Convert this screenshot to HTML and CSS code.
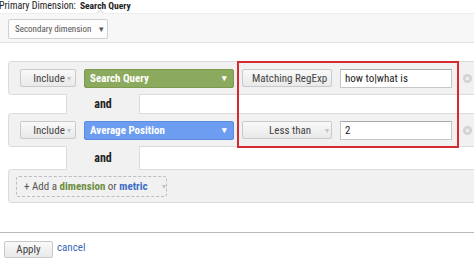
FILE: index.html
```html
<!DOCTYPE html>
<html>
<head>
<meta charset="utf-8">
<link rel="stylesheet" href="styles.css">
</head>
<body>
<div class="primary"><span class="lbl">Primary Dimension:</span><span class="val">Search Query</span></div>
<div class="toolbar">
  <div class="secdim">Secondary dimension <span class="caret-dark">&#9662;</span></div>
</div>
<div class="builder">
  <div class="row">
    <div class="btn include">Include<span class="caret-light">&#9662;</span></div>
    <div class="select green">Search Query<span class="caret-white">&#9662;</span></div>
    <div class="btn match">Matching RegExp</div>
    <div class="input">how to|what is</div>
    <div class="close"><svg width="9" height="9" viewBox="0 0 9 9"><circle cx="4.5" cy="4.5" r="4.5" fill="#d2d2d2"/><path d="M2.8 2.8 L6.2 6.2 M6.2 2.8 L2.8 6.2" stroke="#f4f4f4" stroke-width="1.2"/></svg></div>
  </div>
  <div class="and and-1"><span>and</span></div>
  <div class="row">
    <div class="btn include">Include<span class="caret-light">&#9662;</span></div>
    <div class="select blue">Average Position<span class="caret-white">&#9662;</span></div>
    <div class="btn less">Less than<span class="caret-light">&#9662;</span></div>
    <div class="input">2</div>
    <div class="close"><svg width="9" height="9" viewBox="0 0 9 9"><circle cx="4.5" cy="4.5" r="4.5" fill="#d2d2d2"/><path d="M2.8 2.8 L6.2 6.2 M6.2 2.8 L2.8 6.2" stroke="#f4f4f4" stroke-width="1.2"/></svg></div>
  </div>
  <div class="and and-2"><span>and</span></div>
  <div class="row row-add">
    <div class="add">+ Add a <b class="dim">dimension</b> or <b class="met">metric</b><span class="caret-light add-caret">&#9662;</span></div>
  </div>
  <div class="highlight"></div>
</div>
<div class="divider"></div>
<div class="actions">
  <div class="btn apply">Apply</div>
  <span class="cancel">cancel</span>
</div>
</body>
</html>
```
FILE: styles.css
```css
html, body {
  margin: 0;
  padding: 0;
  background: #ffffff;
  overflow: hidden;
}
body {
  width: 474px;
  height: 261px;
  font-family: "Liberation Sans Narrow", "Arial Narrow", "Roboto Condensed", "Liberation Sans", Arial, sans-serif;
  font-size: 11px;
  color: #333;
  white-space: nowrap;
}
.primary {
  height: 13px;
  line-height: 12px;
  font-size: 10px;
  color: #222;
  margin-left: -1px;
}
.primary .val {
  font-weight: bold;
  font-size: 9.5px;
  margin-left: 4px;
}
.toolbar {
  position: relative;
  background: #f7f7f7;
  border-top: 1px solid #eeeeee;
  border-bottom: 1px solid #e0e0e0;
  padding: 5px 0 0 8px;
  box-sizing: border-box;
  height: 30px;
}
.toolbar::before {
  content: "";
  position: absolute;
  left: 96px;
  top: -5px;
  border-left: 4px solid transparent;
  border-right: 4px solid transparent;
  border-bottom: 4px solid #e2e2e2;
}
.toolbar::after {
  content: "";
  position: absolute;
  left: 97px;
  top: -3px;
  border-left: 3px solid transparent;
  border-right: 3px solid transparent;
  border-bottom: 3px solid #f7f7f7;
}
.secdim {
  display: inline-flex;
  align-items: center;
  width: 100px;
  height: 20px;
  box-sizing: border-box;
  border: 1px solid #cfcfcf;
  border-radius: 2px;
  background: #fdfdfd;
  padding-left: 6px;
  font-size: 9px;
  color: #555;
}
.caret-dark {
  font-size: 9px;
  color: #555;
  margin-left: 8px;
}
.builder {
  position: relative;
  margin-top: 18px;
  margin-left: 8px;
  width: 466px;
}
.row {
  display: flex;
  align-items: center;
  height: 34px;
  box-sizing: border-box;
  background: #f1f1f1;
  border: 1px solid #dcdcdc;
  border-right: none;
  border-radius: 4px 0 0 4px;
  padding-left: 11px;
}
.and {
  position: relative;
  z-index: 1;
  margin: -1px 0 -1px 58px;
  width: 74px;
  box-sizing: border-box;
  background: #f1f1f1;
  border-left: 1px solid #dcdcdc;
  border-right: 1px solid #dcdcdc;
  display: flex;
  align-items: center;
  justify-content: center;
  font-weight: bold;
  font-size: 12px;
  color: #222;
}
.and-1 { height: 20px; }
.and-2 { height: 24px; }
.btn {
  display: flex;
  align-items: center;
  justify-content: center;
  box-sizing: border-box;
  height: 18px;
  border: 1px solid #c9c9c9;
  border-radius: 2px;
  background: linear-gradient(#f9f9f9, #e9e9e9);
  color: #444;
  overflow: hidden;
}
.include {
  width: 56px;
  padding-left: 8px;
}
.caret-light {
  font-size: 8px;
  color: #c4c4c4;
  margin-left: 2px;
}
.select {
  display: flex;
  align-items: center;
  justify-content: space-between;
  box-sizing: border-box;
  width: 150px;
  height: 19px;
  margin-left: 8px;
  padding: 0 6px 0 5px;
  border-radius: 2px;
  color: #ffffff;
  font-weight: bold;
}
.green {
  background: #8caa5e;
  border: 1px solid #7b9a4e;
}
.blue {
  background: #6d9df0;
  border: 1px solid #5b8be0;
}
.caret-white {
  font-size: 9px;
  color: #ffffff;
}
.match {
  width: 90px;
  margin-left: 8px;
  justify-content: flex-start;
  padding-left: 9px;
}
.less {
  width: 90px;
  margin-left: 8px;
  justify-content: flex-start;
  padding-left: 26px;
}
.less .caret-light {
  margin-left: 14px;
}
.input {
  display: flex;
  align-items: center;
  box-sizing: border-box;
  width: 112px;
  height: 19px;
  margin-left: 8px;
  padding-left: 4px;
  background: #ffffff;
  border: 1px solid #c6c6c6;
  border-top-color: #a9a9a9;
  color: #222;
}
.close {
  display: flex;
  margin-left: 11px;
}
.row-add {
  padding-left: 7px;
}
.add {
  display: flex;
  align-items: center;
  box-sizing: border-box;
  width: 151px;
  height: 21px;
  border: 1px dashed #bdbdbd;
  border-radius: 3px;
  padding-left: 7px;
  color: #555;
  white-space: pre;
}
.dim { color: #6f8d42; }
.met { color: #3e6ec6; }
.add-caret {
  margin-left: 14px;
}
.highlight {
  position: absolute;
  left: 229px;
  top: 0;
  width: 222px;
  height: 87px;
  box-sizing: border-box;
  border: 2px solid #d52a2f;
}
.divider {
  margin-top: 29px;
  height: 1px;
  background: #b9b9b9;
}
.actions {
  display: flex;
  align-items: center;
  margin-top: 8px;
  padding-left: 4px;
}
.apply {
  width: 49px;
  height: 17px;
}
.cancel {
  margin-left: 4px;
  margin-top: -4px;
  color: #3a68b6;
}
```
